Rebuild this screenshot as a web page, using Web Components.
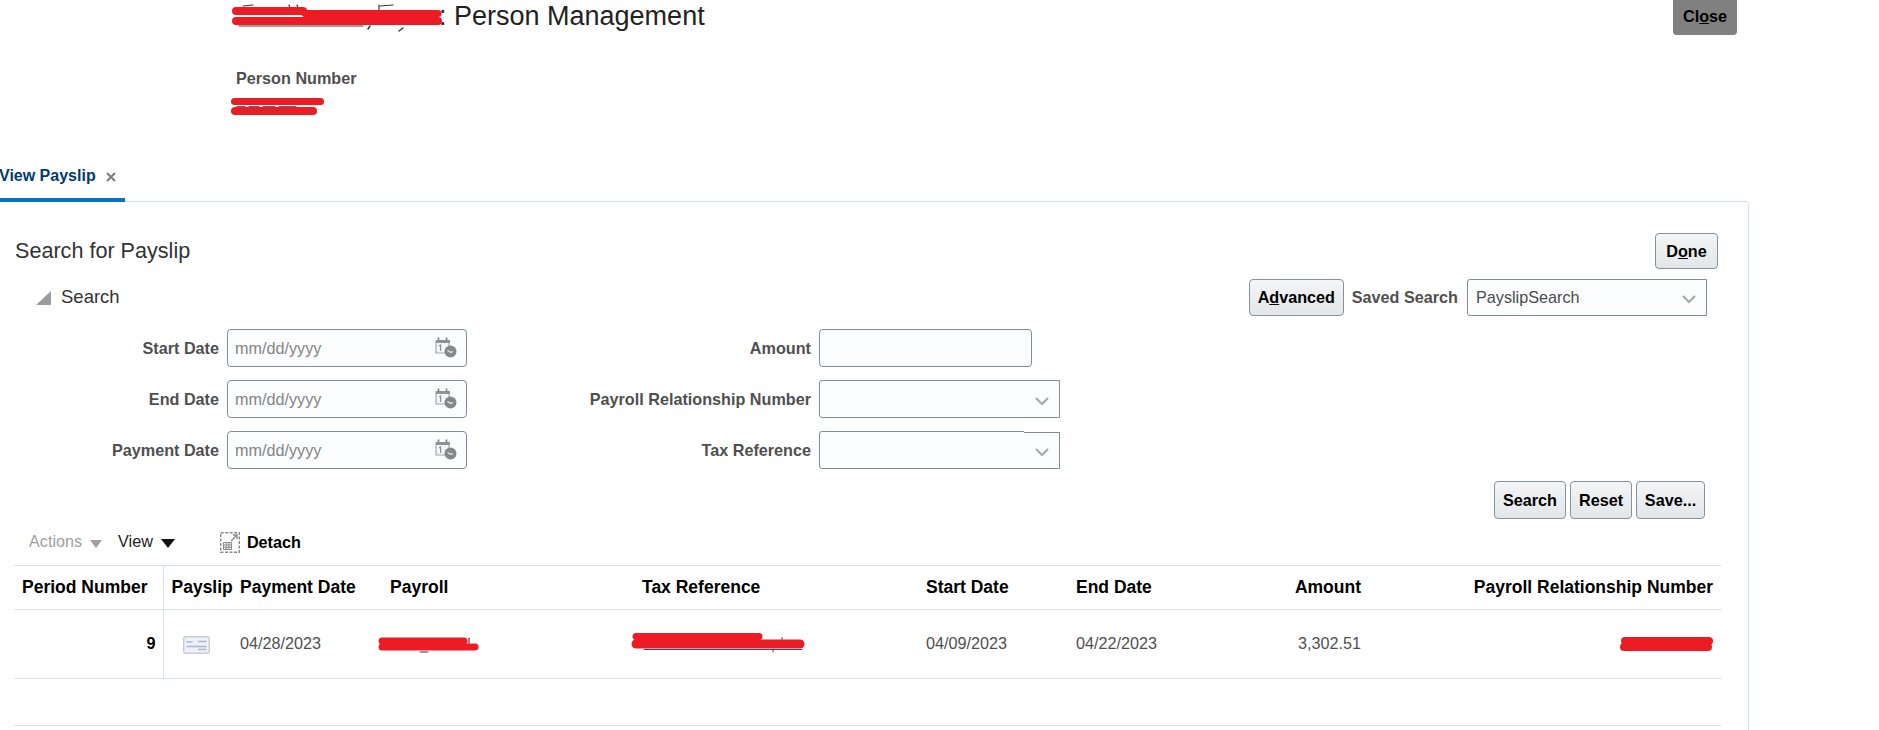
<!DOCTYPE html>
<html lang="en">
<head>
<meta charset="utf-8">
<title>View Payslip</title>
<style>
    html, body { margin: 0; height: 730px; overflow: hidden; background: #fff; }
    body { font-family: "Liberation Sans", Arial, sans-serif; font-size: 16.2px; color: #4a4a4a; }
</style>
</head>
<body>
<payslip-page></payslip-page>

<script>
const CALENDAR = `<svg width="22" height="21" viewBox="0 0 22 21">
    <path d="M1 4h13v12H1z" fill="#f4f5f5" stroke="#a4a7a9" stroke-width="1.2"/>
    <path d="M1 3h14v3H1z" fill="#8f9294"/>
    <path d="M3.5 0.5v3M11.5 0.5v3" stroke="#7d8082" stroke-width="1.6"/>
    <path d="M4 9l1.6-1v6" fill="none" stroke="#8f9294" stroke-width="1.2"/>
    <circle cx="15.5" cy="14.5" r="6" fill="#84888a"/>
    <path d="M12.5 13.5l3 1.8 2.5-.6" fill="none" stroke="#e8e8e8" stroke-width="1.2"/>
</svg>`;
const CHEVRON = `<svg width="14" height="9" viewBox="0 0 14 9"><path d="M1 1l6 6 6-6" fill="none" stroke="#a3a7aa" stroke-width="2"/></svg>`;

// red marker strokes drawn over redacted values; lines = "x1,y1,x2,y2,width;..."
class RedAct extends HTMLElement {
    connectedCallback() {
        const w = this.getAttribute('w');
        const h = this.getAttribute('h');
        const toLines = (value, color) => (value || '').split(';').filter(Boolean).map(item => {
            const [x1, y1, x2, y2, sw] = item.split(',');
            return `<line x1="${x1}" y1="${y1}" x2="${x2}" y2="${y2}" stroke="${color}" stroke-width="${sw}" stroke-linecap="round"/>`;
        }).join('');
        this.attachShadow({ mode: 'open' });
        this.shadowRoot.innerHTML = `
            <style>
                :host { display: inline-block; line-height: 0; flex: none; }
                svg { overflow: visible; display: block; }
            </style>
            <svg width="${w}" height="${h}" viewBox="0 0 ${w} ${h}">
                ${toLines(this.getAttribute('under'), this.getAttribute('under-color') || '#3a3a3a')}
                ${toLines(this.getAttribute('lines'), '#ed1c24')}
            </svg>`;
    }
}

class UiButton extends HTMLElement {
    constructor() {
        super();
        this.attachShadow({ mode: 'open' });
        this.shadowRoot.innerHTML = `
            <style>
                :host {
                    display: inline-flex;
                    align-items: center;
                    justify-content: center;
                    box-sizing: border-box;
                    height: 37px;
                    padding: 0 8px;
                    border: 1px solid #82939f;
                    border-radius: 4px;
                    background: linear-gradient(#f3f5f6, #e3e6e8);
                    color: #000;
                    font-weight: bold;
                    font-size: 16.2px;
                    white-space: nowrap;
                }
                :host([dark]) {
                    background: #808080;
                    border-color: #808080;
                    border-radius: 0 0 4px 4px;
                    height: 35px;
                    padding-bottom: 2px;
                    border-top: 0;
                }
            </style>
            <slot></slot>`;
    }
}

class FieldLabel extends HTMLElement {
    constructor() {
        super();
        this.attachShadow({ mode: 'open' });
        this.shadowRoot.innerHTML = `
            <style>
                :host {
                    display: flex;
                    align-items: center;
                    justify-content: flex-end;
                    font-weight: bold;
                    font-size: 16.2px;
                    color: #4f4f4f;
                    white-space: nowrap;
                }
            </style>
            <slot></slot>`;
    }
}

class DateInput extends HTMLElement {
    constructor() {
        super();
        this.attachShadow({ mode: 'open' });
        this.shadowRoot.innerHTML = `
            <style>
                :host {
                    display: flex;
                    align-items: center;
                    justify-content: space-between;
                    box-sizing: border-box;
                    height: 38px;
                    padding: 0 9px 0 7px;
                    border: 1px solid #7c8e9c;
                    border-radius: 4px;
                    background: #fbfdff;
                    color: #848484;
                    font-size: 16.2px;
                }
                svg { margin-top: -2px; }
            </style>
            <span>mm/dd/yyyy</span>${CALENDAR}`;
    }
}

class TextInput extends HTMLElement {
    constructor() {
        super();
        this.attachShadow({ mode: 'open' });
        this.shadowRoot.innerHTML = `
            <style>
                :host {
                    display: block;
                    box-sizing: border-box;
                    height: 38px;
                    border: 1px solid #7c8e9c;
                    border-radius: 4px;
                    background: #fbfdff;
                }
            </style>`;
    }
}

class SelectInput extends HTMLElement {
    constructor() {
        super();
        this.attachShadow({ mode: 'open' });
        this.shadowRoot.innerHTML = `
            <style>
                :host {
                    display: flex;
                    align-items: center;
                    justify-content: space-between;
                    position: relative;
                    box-sizing: border-box;
                    height: 38px;
                    padding: 0 10px 0 8px;
                    border: 1px solid #7c8e9c;
                    border-radius: 3px 0 0 3px;
                    background: #fbfdff;
                    color: #4a4a4a;
                    font-size: 16.2px;
                }
                /* right end of the top edge sits a pixel lower on the last select */
                :host([step])::after {
                    content: "";
                    position: absolute;
                    top: -1px;
                    right: -1px;
                    width: 36px;
                    height: 1px;
                    background: #fff;
                    border-bottom: 1px solid #7c8e9c;
                }
                svg { margin-top: 4px; }
                span { margin-top: -1px; }
            </style>
            <span><slot></slot></span>${CHEVRON}`;
    }
}

class PersonHeader extends HTMLElement {
    constructor() {
        super();
        this.attachShadow({ mode: 'open' });
        this.shadowRoot.innerHTML = `
            <style>
                :host {
                    display: flex;
                    justify-content: space-between;
                    align-items: flex-start;
                    box-sizing: border-box;
                    height: 150px;
                    padding: 0 142px 0 233px;
                }
                h1 {
                    display: flex;
                    margin: 0;
                    font-size: 27px;
                    font-weight: normal;
                    line-height: 32px;
                    color: #222;
                    white-space: pre;
                }
                .label {
                    margin: 36px 0 0 3px;
                    font-weight: bold;
                    font-size: 16.2px;
                    line-height: 20px;
                    color: #4f4f4f;
                }
                .value { display: block; margin: 9px 0 0 -2px; }
            </style>
            <div>
                <h1><red-act w="206" h="32"
                    under="10,6,20,5,1.2;56,5,57,8,1.2;64,5,65,8,1.2;147,6,160,5,1.2;146,5,146,10,1.2;6,26,130,26,1;137,26,135,29,1.5;170,28,166,31,1.5"
                    lines="3,11,70,11,8;3,21,205,21,8;72,13.5,205,13.5,7"></red-act><span>: Person Management</span></h1>
                <div class="label">Person Number</div>
                <red-act class="value" w="94" h="22" under-color="#666"
                    under="6,9.5,14,9.5,1;18,9.5,28,9.5,1;32,9.5,44,9.5,1;48,9.5,65,9.5,1"
                    lines="3.5,4.5,89.5,4.5,7;4,14,82,14,8"></red-act>
            </div>
            <ui-button dark style="width:64px"><span>Cl<u>o</u>se</span></ui-button>`;
    }
}

class TabStrip extends HTMLElement {
    constructor() {
        super();
        this.attachShadow({ mode: 'open' });
        this.shadowRoot.innerHTML = `
            <style>
                :host { display: block; position: relative; z-index: 1; height: 52px; }
                .tab {
                    display: flex;
                    align-items: center;
                    gap: 10px;
                    box-sizing: border-box;
                    width: 125px;
                    height: 52px;
                    padding-top: 4px;
                    border-bottom: 4px solid #0572ce;
                    font-weight: bold;
                    font-size: 16px;
                    color: #003b71;
                    white-space: nowrap;
                }
                span { margin-left: -1px; }
                svg { margin-top: 2px; }
            </style>
            <div class="tab">
                <span>View Payslip</span>
                <svg width="10" height="10" viewBox="0 0 10 10"><path d="M1 1l8 8M9 1l-8 8" stroke="#7b7b7b" stroke-width="1.9"/></svg>
            </div>`;
    }
}

class SearchForm extends HTMLElement {
    constructor() {
        super();
        this.attachShadow({ mode: 'open' });
        this.shadowRoot.innerHTML = `
            <style>
                :host {
                    display: grid;
                    grid-template-columns: 219px 240px 336px 241px;
                    grid-auto-rows: 38px;
                    gap: 13px 8px;
                    margin-top: 13px;
                }
            </style>
            <slot></slot>`;
    }
}

class ResultsToolbar extends HTMLElement {
    constructor() {
        super();
        this.attachShadow({ mode: 'open' });
        this.shadowRoot.innerHTML = `
            <style>
                :host {
                    display: flex;
                    align-items: center;
                    height: 22px;
                    margin-top: 12px;
                    padding-left: 29px;
                    font-size: 16.2px;
                    white-space: nowrap;
                }
                .off, .on { margin-top: -2px; }
                .off { color: #a0a0a0; }
                .on { color: #222; }
                .off svg { margin: 0 16px 0 8px; vertical-align: -1px; }
                .on svg { margin: 0 45px 0 8px; vertical-align: -1px; }
                .detach { display: flex; align-items: center; gap: 7px; color: #000; font-weight: bold; }
            </style>
            <span class="off">Actions<svg width="12" height="8" viewBox="0 0 12 8"><path d="M0 0h12L6 8z" fill="#a0a0a0"/></svg></span>
            <span class="on">View<svg width="14" height="9" viewBox="0 0 14 9"><path d="M0 0h14L7 9z" fill="#111"/></svg></span>
            <span class="detach">
                <svg width="20" height="21" viewBox="0 0 20 21">
                    <rect x="0.7" y="0.7" width="18.6" height="19.6" fill="#fbfbfb" stroke="#8b8b8b" stroke-width="1.4" stroke-dasharray="3 1.5"/>
                    <path d="M11 9l6-6M13 3h4v4" fill="none" stroke="#8b8b8b" stroke-width="1.3"/>
                    <path d="M3.5 10.5h8v7h-8zM3.5 13h8M3.5 15.3h8M6.2 10.5v7M8.9 10.5v7" fill="none" stroke="#8b8b8b" stroke-width="1"/>
                </svg>
                <span>Detach</span>
            </span>`;
    }
}

class ResultsTable extends HTMLElement {
    constructor() {
        super();
        this.attachShadow({ mode: 'open' });
        this.shadowRoot.innerHTML = `
            <style>
                :host { display: block; margin: 12px 0 0 14px; width: 1707px; }
                table {
                    width: 1707px;
                    table-layout: fixed;
                    border-collapse: collapse;
                    font-size: 16.2px;
                }
                tr { border-bottom: 1.5px solid #d9e0e6; }
                thead tr { border-top: 1.5px solid #d9e0e6; height: 44px; }
                tr.data { height: 69px; }
                tr.empty { height: 47px; }
                th {
                    padding: 0 0 0 8px;
                    text-align: left;
                    font-size: 17.5px;
                    color: #000;
                    white-space: nowrap;
                }
                td { padding: 0 0 2px 8px; color: #505050; white-space: nowrap; }
                .num { text-align: right; padding-right: 6px; }
                .end { text-align: right; padding-right: 8px; }
                .first { border-right: 1.5px solid #d9e0e6; padding-right: 7px; }
                .bold { font-weight: bold; color: #000; }
                .payslip { padding: 0 0 0 19px; }
                .payslip svg { display: block; margin-top: 1px; }
                .pay { padding-left: 7px; }
                td red-act { display: block; }
                td.mark { padding: 0; }
                td.mark.right red-act { width: 92px; margin-left: auto; margin-right: 8px; }
            </style>
            <table>
                <colgroup>
                    <col style="width:149px"><col style="width:69px"><col style="width:151px"><col style="width:251px"><col style="width:284px">
                    <col style="width:150px"><col style="width:150px"><col style="width:149px"><col style="width:354px">
                </colgroup>
                <thead>
                    <tr>
                        <th class="first">Period Number</th>
                        <th>Payslip</th>
                        <th>Payment Date</th>
                        <th class="pay">Payroll</th>
                        <th>Tax Reference</th>
                        <th>Start Date</th>
                        <th>End Date</th>
                        <th class="num">Amount</th>
                        <th class="end">Payroll Relationship Number</th>
                    </tr>
                </thead>
                <tbody>
                    <tr class="data">
                        <td class="num first bold">9</td>
                        <td class="payslip">
                            <svg width="27" height="18" viewBox="0 0 27 18">
                                <rect x="0.7" y="0.7" width="25.6" height="16.6" rx="2" fill="#eef1f5" stroke="#c8cdd2" stroke-width="1.4"/>
                                <path d="M3.5 6h6M15 5.5h8.5M3.5 10.5h20M15 13.5h8.5" stroke="#a9b8d6" stroke-width="1.5"/>
                            </svg>
                        </td>
                        <td>04/28/2023</td>
                        <td class="mark">
                            <red-act w="110" h="20" style="margin-left:-4px"
                                under="41,18,49,18,1;90,4,90,9,1.2"
                                lines="3,7,85,7,7;3,13,96,13,7"></red-act>
                        </td>
                        <td class="mark">
                            <red-act w="175" h="20" style="margin-left:-2px"
                                under="12,15.5,170,15.5,1;141,15,141,18,1;150,3.5,150,6,1" under-color="#3a4a68"
                                lines="4,2.5,127,2.5,7;4,10,168,10,9"></red-act>
                        </td>
                        <td>04/09/2023</td>
                        <td>04/22/2023</td>
                        <td class="num">3,302.51</td>
                        <td class="mark right">
                            <red-act w="92" h="14" lines="4,4,88,4,8;3,10,87,10,8"></red-act>
                        </td>
                    </tr>
                    <tr class="empty"><td colspan="9"></td></tr>
                </tbody>
            </table>`;
    }
}

class PayslipPage extends HTMLElement {
    constructor() {
        super();
        this.attachShadow({ mode: 'open' });
        this.shadowRoot.innerHTML = `
            <style>
                :host { display: block; width: 1879px; height: 730px; overflow: hidden; }
                .panel {
                    box-sizing: border-box;
                    width: 1749px;
                    height: 529px;
                    margin-top: -1px;
                    border-top: 1px solid #d6dfe6;
                    border-right: 1px solid #d6dfe6;
                    border-top-right-radius: 4px;
                }
                .head {
                    display: flex;
                    justify-content: space-between;
                    align-items: center;
                    height: 36px;
                    margin-top: 31px;
                    padding: 0 30px 0 15px;
                }
                h2 { margin: 0; font-size: 21.6px; font-weight: normal; color: #333; }
                .search {
                    display: flex;
                    align-items: center;
                    justify-content: space-between;
                    height: 37px;
                    margin-top: 10px;
                    padding: 0 41px 0 36px;
                }
                .disclosure { display: flex; align-items: center; gap: 10px; padding-bottom: 2px; font-size: 18.5px; color: #333; }
                .disclosure svg { margin-top: 3px; }
                .saved { display: flex; align-items: center; gap: 8px; }
                .saved field-label { height: 37px; margin-right: 1px; }
                .saved select-input { width: 240px; height: 37px; }
                .actions {
                    display: flex;
                    justify-content: flex-end;
                    gap: 4px;
                    margin-top: 12px;
                    padding-right: 43px;
                }
                .actions ui-button { height: 38px; }
            </style>
            <person-header></person-header>
            <tab-strip></tab-strip>
            <div class="panel">
                <div class="head">
                    <h2>Search for Payslip</h2>
                    <ui-button style="height:36px;width:63px"><span>D<u>o</u>ne</span></ui-button>
                </div>
                <div class="search">
                    <div class="disclosure">
                        <svg width="15" height="14" viewBox="0 0 15 14"><path d="M15 0v14H0z" fill="#9c9c9c"/></svg>
                        <span>Search</span>
                    </div>
                    <div class="saved">
                        <ui-button style="width:95px"><span>A<u>d</u>vanced</span></ui-button>
                        <field-label>Saved Search</field-label>
                        <select-input>PayslipSearch</select-input>
                    </div>
                </div>
                <search-form>
                    <field-label>Start Date</field-label>
                    <date-input></date-input>
                    <field-label>Amount</field-label>
                    <text-input style="width:213px"></text-input>
                    <field-label>End Date</field-label>
                    <date-input></date-input>
                    <field-label>Payroll Relationship Number</field-label>
                    <select-input></select-input>
                    <field-label>Payment Date</field-label>
                    <date-input></date-input>
                    <field-label>Tax Reference</field-label>
                    <select-input step></select-input>
                </search-form>
                <div class="actions">
                    <ui-button style="width:72px">Search</ui-button>
                    <ui-button style="width:62px">Reset</ui-button>
                    <ui-button style="width:69px">Save...</ui-button>
                </div>
                <results-toolbar></results-toolbar>
                <results-table></results-table>
            </div>`;
    }
}

customElements.define('red-act', RedAct);
customElements.define('ui-button', UiButton);
customElements.define('field-label', FieldLabel);
customElements.define('date-input', DateInput);
customElements.define('text-input', TextInput);
customElements.define('select-input', SelectInput);
customElements.define('person-header', PersonHeader);
customElements.define('tab-strip', TabStrip);
customElements.define('search-form', SearchForm);
customElements.define('results-toolbar', ResultsToolbar);
customElements.define('results-table', ResultsTable);
customElements.define('payslip-page', PayslipPage);
</script>
</body>
</html>
